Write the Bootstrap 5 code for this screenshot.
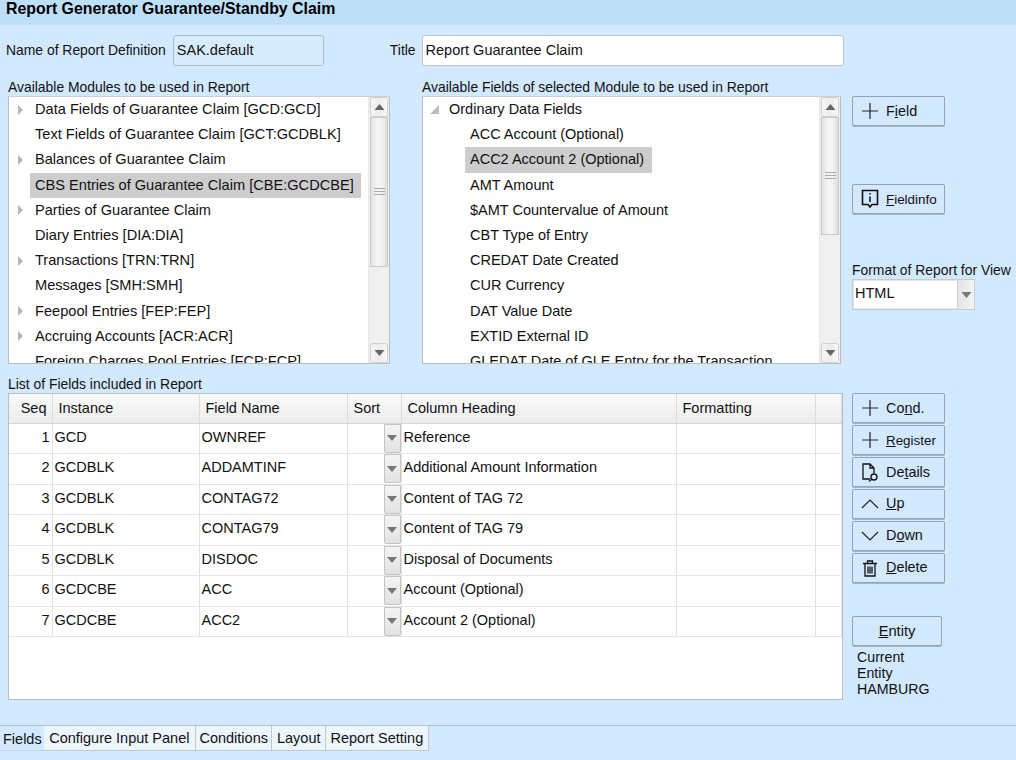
<!DOCTYPE html>
<html lang="en"><head><meta charset="utf-8"><title>Report Generator</title>
<link href="https://cdn.jsdelivr.net/npm/bootstrap@5.3.0/dist/css/bootstrap.min.css" rel="stylesheet">
<style>
html,body{height:760px;overflow:hidden}
body{background:#d2e9ff;font-family:"Liberation Sans",Arial,sans-serif;font-size:14.5px;color:#111;line-height:17px}
.shell{height:760px;width:1016px}
.titlebar{height:25px;background:#bedff8;font-weight:700;font-size:15.9px;padding:0 6px;line-height:17px;color:#000}
.namerow{height:32px;margin-top:9px;padding-left:6px}
.lab14{font-size:13.9px}
.namebox{width:151px;height:31px;margin-left:7px;background:#d8edfc;border:1px solid #a9bccb;border-radius:3px;padding:0 3px;line-height:28px}
.titlelab{margin-left:66px}
.titlebox{width:422px;height:31px;margin-left:6px;background:#fff;border:1px solid #b9c6d0;border-radius:3px;padding:0 3px;line-height:28px}
.listarea{margin-top:13px;height:297px}
.leftcol{width:382px;margin-left:8px}
.midcol{width:419px;margin-left:32px}
.sidecol{margin-left:11px;width:164px;padding-top:17px}
.cap{height:17px;white-space:nowrap;font-size:13.9px}
.treebox{height:268px;background:#fff;border:1px solid #b5bfc7;border-top-color:#c6d0d8;overflow:hidden}
.treelist{flex:1 1 auto;min-width:0;overflow:hidden}
.leftcol .treelist{font-size:14.6px}
.treerow{height:25.2px;line-height:25px;white-space:nowrap;display:flex;align-items:center}
.tw{width:23px;flex:none;display:flex;justify-content:center}
.tw2{width:47px}
.tw3{width:44px}
.hit{padding:0 4px 0 5px;height:100%;margin-left:-2px}
.hit.sel{background:#cdcdcd;padding-right:8px}
.leftcol .hit.sel{padding-right:7px}
.sbar{width:21px;flex:none;background:#f0f0f0;padding:0 1px;display:flex;flex-direction:column;border-left:1px solid #e8e8e8}
.sbtn{height:20px;flex:none;background:linear-gradient(90deg,#f6f6f6,#ececec 50%,#f8f8f8);border:1px solid #cfcfcf;border-radius:3px;display:flex;align-items:center;justify-content:center}
.sthumb{background:linear-gradient(90deg,#e2e2e2,#f6f6f6 40%,#f2f2f2 70%,#dcdcdc);border:1px solid #c9c9c9;display:flex;align-items:center;justify-content:center}
.thumb-a{height:150px}.thumb-b{height:118px}
.sfill{flex:1 1 auto}
.tool{width:93px;height:30px;padding:0;background:#d2e9ff;border:1px solid #8fa4b5;border-radius:2px;color:#111;font-size:14.4px;line-height:17px;display:flex;align-items:center;text-align:left;box-shadow:0 1px 0 #a5b4c0}
.tool:hover{background:#d2e9ff;color:#111;border-color:#8fa4b5}
.tight{font-size:13.4px}
.lift .lbl{margin-top:-2px}
.ico{width:33px;flex:none;display:flex;justify-content:center}
.gap-a{height:58px}.gap-b{height:48px}
.picker{width:123px;height:31px;background:#fff;border:1px solid #c4ccd2;box-shadow:inset 0 0 0 1px #e3e6e8}
.picker .val{flex:1;line-height:26px;padding-left:2px}
.pickbtn{width:17px;flex:none;background:linear-gradient(90deg,#e4e4e4,#f3f3f3);border-left:1px solid #d0d0d0;display:flex;align-items:center;justify-content:center}
.tablezone{height:332px}
.gridbox{width:835px;margin-left:8px;height:307px;background:#fff;border:1px solid #b5bfc7;overflow:hidden}
.gridtab{table-layout:fixed;width:833px;margin:0;border-collapse:collapse;color:#111}
.gridtab th,.gridtab td{padding:0 2px;border:0;border-right:1px solid #e2e2e2;border-bottom:1px solid #e6e6e6;font-weight:400;font-size:14.5px;white-space:nowrap;overflow:hidden;background:transparent;box-shadow:none;color:#111;vertical-align:middle}
.gridtab td{padding-bottom:2px}
.gridtab th{height:29px;background:linear-gradient(#fafafa,#ececec);border-right:1px solid #dcdcdc;border-bottom:1px solid #d6d6d6;padding-left:6px}
.gridtab tbody tr:nth-child(odd) td{height:30px}
.gridtab tbody tr:nth-child(even) td{height:31px}
.gridtab th.num{padding:0 5px 0 0;text-align:right}
.gridtab td.num{text-align:right;padding-right:2px}
.gridtab td.sortcell{padding:0}
.c1{width:43px}.c2{width:147px}.c3{width:148px}.c4{width:54px}.c5{width:275px}.c6{width:139px}
.sortwrap{height:29px}
.sortbtn{width:17px;height:29px;background:linear-gradient(#f4f4f4,#e2e2e2);border:1px solid #c4c4c4;border-radius:0 0 2px 2px;display:flex;align-items:center;justify-content:center}
.sidetab{margin-left:9px;width:164px;gap:2px}
.gap-c{height:29px}
.entinfo{padding-left:5px;margin-top:1px;line-height:16px;font-size:14.2px}
.entbtn{width:90px;justify-content:center;font-size:14.7px}
.tabbar{height:35px;border-top:1px solid #aebfcd}
.tabbar .nav-link{padding:0 4.5px;height:25px;line-height:24px;color:#111;background:#edf6ff;border:1px solid #c0c8ce;border-top:0;border-left-width:0;font-size:14.5px;white-space:nowrap}
.tabbar .nav-link.on{background:#d2e9ff;padding:0 2px 0 3px;border:0;border-bottom:1px solid #c0d4e2;line-height:26px}
.tabbar .nav-link.wide{padding:0 5.5px}
.tabbar .nav-link.slim{padding:0 3.5px}
</style></head>
<body>
<div class="shell d-flex flex-column">
  <div class="titlebar">Report Generator Guarantee/Standby Claim</div>
  <div class="namerow d-flex align-items-center">
    <span class="lab14">Name of Report Definition</span><div class="namebox">SAK.default</div>
    <span class="titlelab lab14">Title</span><div class="titlebox">Report Guarantee Claim</div>
  </div>
  <div class="listarea d-flex">
    <div class="leftcol">
      <div class="cap">Available Modules to be used in Report</div>
      <div class="treebox d-flex">
        <div class="treelist">
          <div class="treerow"><span class="tw"><svg width="7" height="10"><path d="M1 0l5 5-5 5z" fill="#b5b5b5"/></svg></span><span class="hit">Data Fields of Guarantee Claim [GCD:GCD]</span></div>
          <div class="treerow"><span class="tw"></span><span class="hit">Text Fields of Guarantee Claim [GCT:GCDBLK]</span></div>
          <div class="treerow"><span class="tw"><svg width="7" height="10"><path d="M1 0l5 5-5 5z" fill="#b5b5b5"/></svg></span><span class="hit">Balances of Guarantee Claim</span></div>
          <div class="treerow"><span class="tw"></span><span class="hit sel">CBS Entries of Guarantee Claim [CBE:GCDCBE]</span></div>
          <div class="treerow"><span class="tw"><svg width="7" height="10"><path d="M1 0l5 5-5 5z" fill="#b5b5b5"/></svg></span><span class="hit">Parties of Guarantee Claim</span></div>
          <div class="treerow"><span class="tw"></span><span class="hit">Diary Entries [DIA:DIA]</span></div>
          <div class="treerow"><span class="tw"><svg width="7" height="10"><path d="M1 0l5 5-5 5z" fill="#b5b5b5"/></svg></span><span class="hit">Transactions [TRN:TRN]</span></div>
          <div class="treerow"><span class="tw"></span><span class="hit">Messages [SMH:SMH]</span></div>
          <div class="treerow"><span class="tw"><svg width="7" height="10"><path d="M1 0l5 5-5 5z" fill="#b5b5b5"/></svg></span><span class="hit">Feepool Entries [FEP:FEP]</span></div>
          <div class="treerow"><span class="tw"><svg width="7" height="10"><path d="M1 0l5 5-5 5z" fill="#b5b5b5"/></svg></span><span class="hit">Accruing Accounts [ACR:ACR]</span></div>
          <div class="treerow"><span class="tw"></span><span class="hit">Foreign Charges Pool Entries [FCP:FCP]</span></div>
        </div>
        <div class="sbar">
          <div class="sbtn"><svg width="11" height="6"><path d="M5.500 0l5 6h-10z" fill="#666"/></svg></div>
          <div class="sthumb thumb-a"><svg width="11" height="8"><path d="M0 .5h11M0 3.500h11M0 6.500h11" stroke="#aaa"/></svg></div>
          <div class="sfill"></div>
          <div class="sbtn"><svg width="11" height="6"><path d="M5.500 6l5-6h-10z" fill="#666"/></svg></div>
        </div>
      </div>
    </div>
    <div class="midcol">
      <div class="cap">Available Fields of selected Module to be used in Report</div>
      <div class="treebox d-flex">
        <div class="treelist">
          <div class="treerow"><span class="tw"><svg width="9" height="9"><path d="M9 0v9H0z" fill="#bdbdbd"/></svg></span><span class="hit">Ordinary Data Fields</span></div>
          <div class="treerow"><span class="tw tw2"></span>ACC Account (Optional)</div>
          <div class="treerow"><span class="tw tw3"></span><span class="hit sel">ACC2 Account 2 (Optional)</span></div>
          <div class="treerow"><span class="tw tw2"></span>AMT Amount</div>
          <div class="treerow"><span class="tw tw2"></span>$AMT Countervalue of Amount</div>
          <div class="treerow"><span class="tw tw2"></span>CBT Type of Entry</div>
          <div class="treerow"><span class="tw tw2"></span>CREDAT Date Created</div>
          <div class="treerow"><span class="tw tw2"></span>CUR Currency</div>
          <div class="treerow"><span class="tw tw2"></span>DAT Value Date</div>
          <div class="treerow"><span class="tw tw2"></span>EXTID External ID</div>
          <div class="treerow"><span class="tw tw2"></span>GLEDAT Date of GLE Entry for the Transaction</div>
        </div>
        <div class="sbar">
          <div class="sbtn"><svg width="11" height="6"><path d="M5.500 0l5 6h-10z" fill="#666"/></svg></div>
          <div class="sthumb thumb-b"><svg width="11" height="8"><path d="M0 .5h11M0 3.500h11M0 6.500h11" stroke="#aaa"/></svg></div>
          <div class="sfill"></div>
          <div class="sbtn"><svg width="11" height="6"><path d="M5.500 6l5-6h-10z" fill="#666"/></svg></div>
        </div>
      </div>
    </div>
    <div class="sidecol">
      <button class="btn tool"><span class="ico"><svg width="16" height="16"><path d="M8 0v16M0 8h16" stroke="#222" stroke-width="1.2"/></svg></span><span>F<u>i</u>eld</span></button>
      <div class="gap-a"></div>
      <button class="btn tool tight"><span class="ico"><svg width="18" height="20"><path d="M1.500 1.500h15v14h-5.500l-2 2.500-2-2.500h-5.500z" fill="none" stroke="#111" stroke-width="1.6"/><path d="M9 4v1.600M9 7.500v5.500" stroke="#111" stroke-width="1.500"/></svg></span><span><u>F</u>ieldinfo</span></button>
      <div class="gap-b"></div>
      <div class="cap">Format of Report for View</div>
      <div class="picker d-flex"><div class="val">HTML</div><div class="pickbtn"><svg width="11" height="6"><path d="M5.500 6l5-6h-10z" fill="#777"/></svg></div></div>
    </div>
  </div>
  <div class="cap ms-2">List of Fields included in Report</div>
  <div class="tablezone d-flex">
    <div class="gridbox">
      <table class="table gridtab">
        <colgroup><col class="c1"><col class="c2"><col class="c3"><col class="c4"><col class="c5"><col class="c6"><col></colgroup>
        <thead><tr><th class="num">Seq</th><th>Instance</th><th>Field Name</th><th>Sort</th><th>Column Heading</th><th>Formatting</th><th></th></tr></thead>
        <tbody>
          <tr><td class="num">1</td><td>GCD</td><td>OWNREF</td><td class="sortcell"><div class="sortwrap d-flex justify-content-end"><div class="sortbtn"><svg width="10" height="6"><path d="M5 6l5-6H0z" fill="#777"/></svg></div></div></td><td>Reference</td><td></td><td></td></tr>
          <tr><td class="num">2</td><td>GCDBLK</td><td>ADDAMTINF</td><td class="sortcell"><div class="sortwrap d-flex justify-content-end"><div class="sortbtn"><svg width="10" height="6"><path d="M5 6l5-6H0z" fill="#777"/></svg></div></div></td><td>Additional Amount Information</td><td></td><td></td></tr>
          <tr><td class="num">3</td><td>GCDBLK</td><td>CONTAG72</td><td class="sortcell"><div class="sortwrap d-flex justify-content-end"><div class="sortbtn"><svg width="10" height="6"><path d="M5 6l5-6H0z" fill="#777"/></svg></div></div></td><td>Content of TAG 72</td><td></td><td></td></tr>
          <tr><td class="num">4</td><td>GCDBLK</td><td>CONTAG79</td><td class="sortcell"><div class="sortwrap d-flex justify-content-end"><div class="sortbtn"><svg width="10" height="6"><path d="M5 6l5-6H0z" fill="#777"/></svg></div></div></td><td>Content of TAG 79</td><td></td><td></td></tr>
          <tr><td class="num">5</td><td>GCDBLK</td><td>DISDOC</td><td class="sortcell"><div class="sortwrap d-flex justify-content-end"><div class="sortbtn"><svg width="10" height="6"><path d="M5 6l5-6H0z" fill="#777"/></svg></div></div></td><td>Disposal of Documents</td><td></td><td></td></tr>
          <tr><td class="num">6</td><td>GCDCBE</td><td>ACC</td><td class="sortcell"><div class="sortwrap d-flex justify-content-end"><div class="sortbtn"><svg width="10" height="6"><path d="M5 6l5-6H0z" fill="#777"/></svg></div></div></td><td>Account (Optional)</td><td></td><td></td></tr>
          <tr><td class="num">7</td><td>GCDCBE</td><td>ACC2</td><td class="sortcell"><div class="sortwrap d-flex justify-content-end"><div class="sortbtn"><svg width="10" height="6"><path d="M5 6l5-6H0z" fill="#777"/></svg></div></div></td><td>Account 2 (Optional)</td><td></td><td></td></tr>
        </tbody>
      </table>
    </div>
    <div class="sidetab d-flex flex-column">
      <button class="btn tool"><span class="ico"><svg width="16" height="16"><path d="M8 0v16M0 8h16" stroke="#222" stroke-width="1.2"/></svg></span><span>Co<u>n</u>d.</span></button>
      <button class="btn tool tight"><span class="ico"><svg width="16" height="16"><path d="M8 0v16M0 8h16" stroke="#222" stroke-width="1.2"/></svg></span><span><u>R</u>egister</span></button>
      <button class="btn tool"><span class="ico"><svg width="18" height="19"><path d="M9 16H2V1h7l4 4v5M9 1v4h4" fill="none" stroke="#111" stroke-width="1.3"/><circle cx="13" cy="14" r="3" fill="none" stroke="#111" stroke-width="1.3"/><path d="M11 16l-3 2.500" stroke="#111" stroke-width="1.3"/></svg></span><span>De<u>t</u>ails</span></button>
      <button class="btn tool lift"><span class="ico"><svg width="18" height="10"><path d="M1 9l8-8 8 8" fill="none" stroke="#222" stroke-width="1.2"/></svg></span><span class="lbl"><u>U</u>p</span></button>
      <button class="btn tool lift"><span class="ico"><svg width="18" height="10"><path d="M1 1l8 8 8-8" fill="none" stroke="#222" stroke-width="1.2"/></svg></span><span class="lbl">D<u>o</u>wn</span></button>
      <button class="btn tool lift"><span class="ico"><svg width="14" height="17"><path d="M0 3.500h14M4.500 3V1h5v2M2 4v12h10V4M5 6.500v7M7 6.500v7M9 6.500v7" fill="none" stroke="#111" stroke-width="1.3"/></svg></span><span class="lbl"><u>D</u>elete</span></button>
      <div class="gap-c"></div>
      <button class="btn tool entbtn"><span><u>E</u>ntity</span></button>
      <div class="entinfo">Current<br>Entity<br>HAMBURG</div>
    </div>
  </div>
  <ul class="nav tabbar">
    <li class="nav-item"><a class="nav-link on" href="#">Fields</a></li>
    <li class="nav-item"><a class="nav-link wide" href="#">Configure Input Panel</a></li>
    <li class="nav-item"><a class="nav-link slim" href="#">Conditions</a></li>
    <li class="nav-item"><a class="nav-link" href="#">Layout</a></li>
    <li class="nav-item"><a class="nav-link" href="#">Report Setting</a></li>
  </ul>
</div>
</body></html>
